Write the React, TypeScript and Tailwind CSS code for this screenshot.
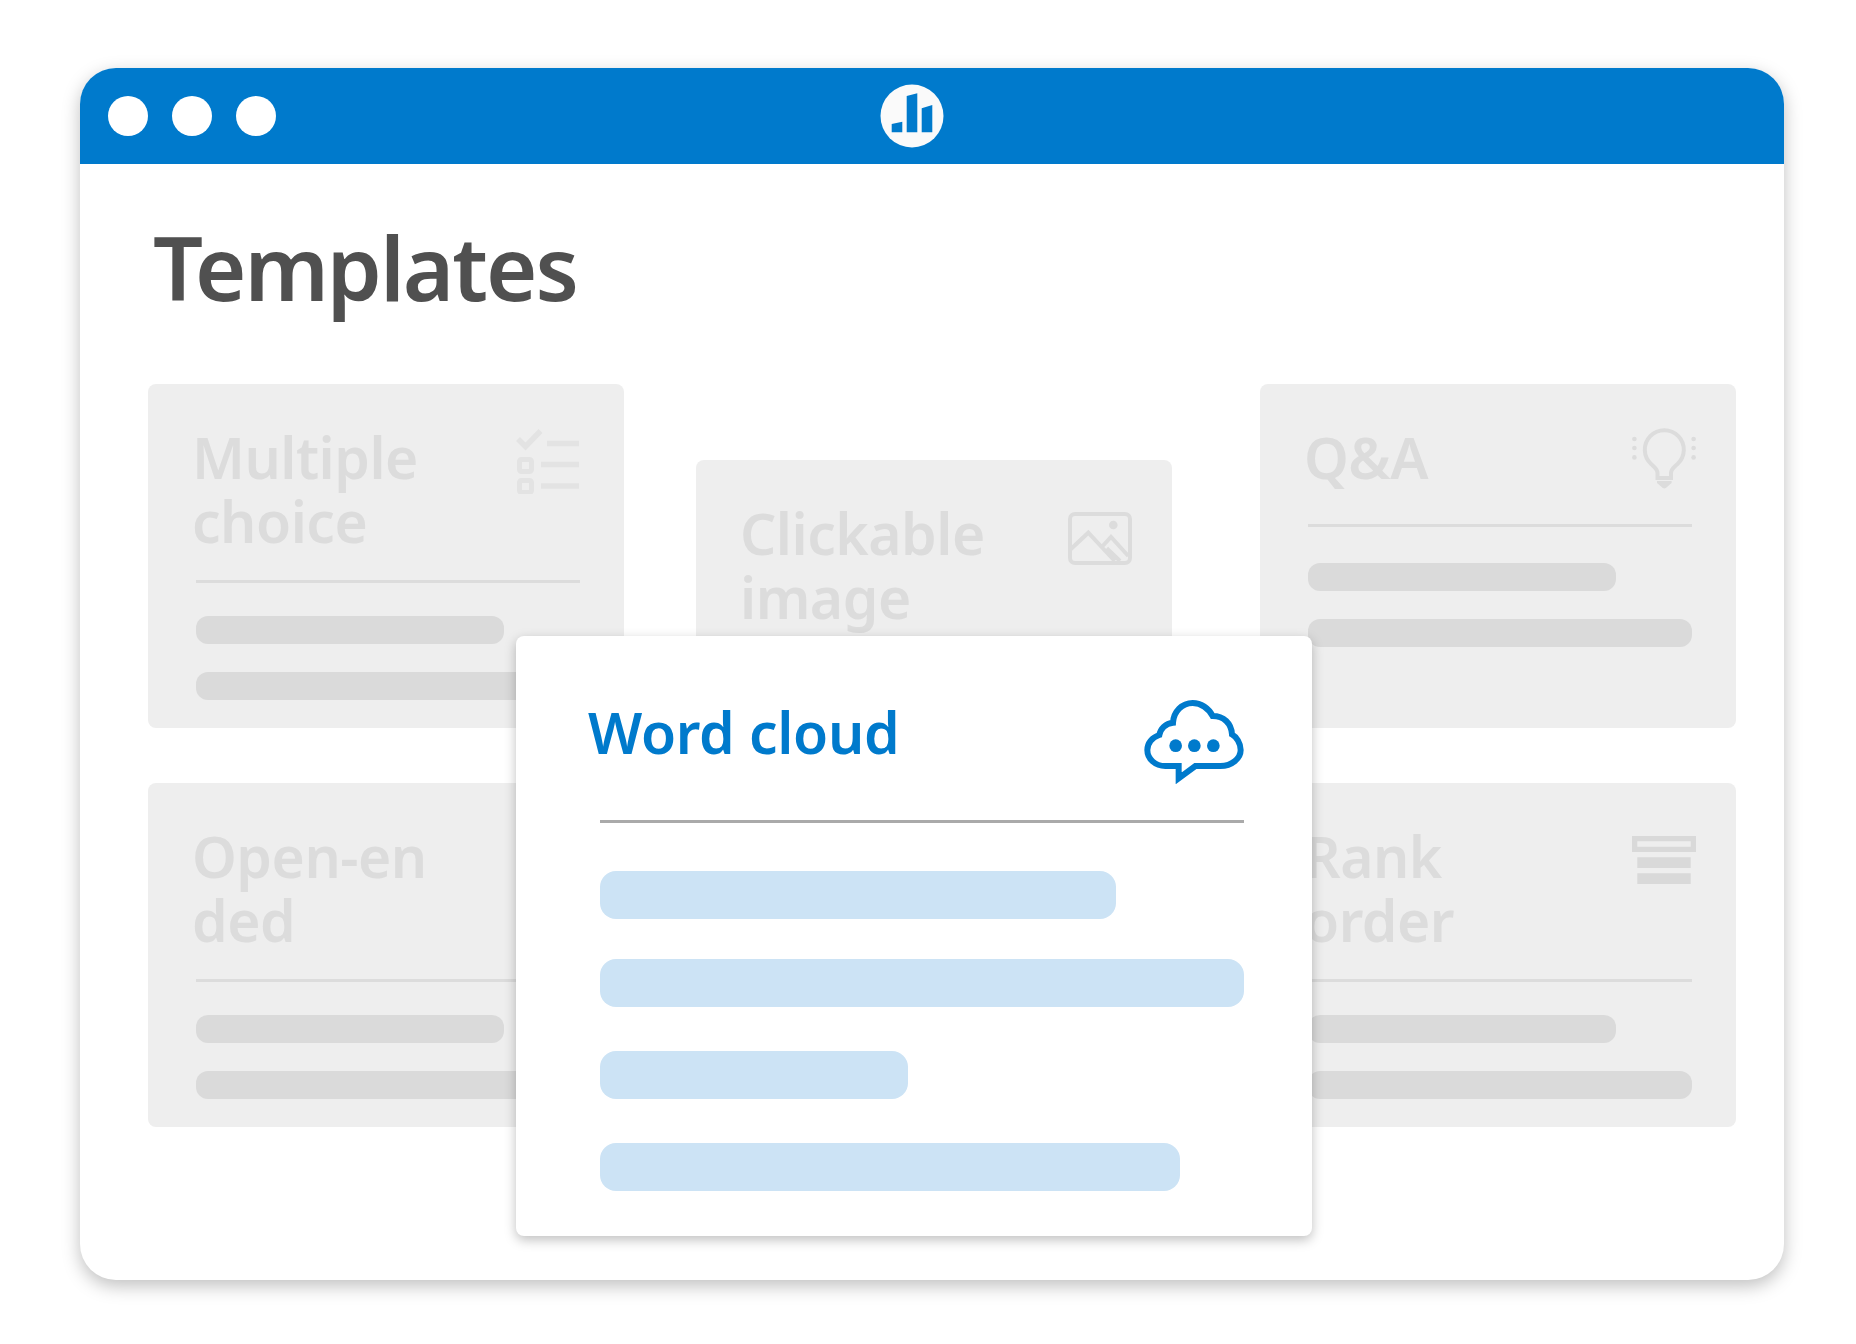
function LogoMark() {
  return (
    <svg width="64" height="64" viewBox="0 0 64 64">
      <circle cx="32" cy="32" r="31.5" fill="#fafafa" />
      <path d="M11.7 40 22.3 37.7V48.3H11.7Z M26.7 12 37.3 9.3V48.3H26.7Z M41.7 24.3 52.3 21V48.3H41.7Z" fill="#007acc" />
    </svg>
  );
}

function ChecklistIcon() {
  return (
    <svg width="64" height="66" viewBox="0 0 64 66" fill="none" stroke="#e3e3e3">
      <path d="M2 11 9.5 18.5 24.5 3" strokeWidth="5.5" />
      <path d="M31 15.5H63 M25 36.5H63 M25 58H63" strokeWidth="5.5" />
      <rect x="3.5" y="31.5" width="12" height="12" rx="2" strokeWidth="5" />
      <rect x="3.5" y="52.5" width="12" height="12" rx="2" strokeWidth="5" />
    </svg>
  );
}

function ImageIcon() {
  return (
    <svg width="64" height="53" viewBox="0 0 64 53" fill="none" stroke="#dcdcdc" strokeWidth="4">
      <rect x="2" y="2" width="60" height="49" rx="5" />
      <circle cx="45.3" cy="13" r="4.3" fill="#dcdcdc" stroke="none" />
      <path d="M2.7 37.3 20.3 20.7 46.7 49 M34.7 34 43 25 60.3 44 M38.7 36.3 52 49" />
    </svg>
  );
}

function BulbIcon() {
  return (
    <svg width="64" height="64" viewBox="0 0 64 64" fill="none" stroke="#dcdcdc" strokeWidth="4">
      <path d="M25.5 50V45C25.5 41 22 39 19.3 36.2A19.5 19.5 0 1 1 45.3 36.2C42.6 39 39 41 39 45V50Z" />
      <path d="M25 53H39.6V55L35 59A3.2 3.2 0 0 1 29.6 59L25 55Z" fill="#dcdcdc" stroke="none" />
      <g fill="#dcdcdc" stroke="none">
        <circle cx="2.4" cy="11" r="2.3" />
        <circle cx="2.4" cy="20" r="2.3" />
        <circle cx="2.4" cy="29.4" r="2.3" />
        <circle cx="61.6" cy="11" r="2.3" />
        <circle cx="61.6" cy="20" r="2.3" />
        <circle cx="61.6" cy="29.4" r="2.3" />
      </g>
    </svg>
  );
}

function RankIcon() {
  return (
    <svg width="64" height="48" viewBox="0 0 64 48">
      <path fillRule="evenodd" d="M0 0H64V16H0Z M5.3 5.3V10.7H58.7V5.3Z" fill="#d9d9d9" />
      <path d="M5.3 21.3H58.7V32H5.3Z M5.3 37.3H58.7V48H5.3Z" fill="#d9d9d9" />
    </svg>
  );
}

function CloudIcon() {
  return (
    <svg width="100" height="84" viewBox="42 30 298 252" fill="none" stroke="#007acc" strokeWidth="18">
      <path d="M145 228V265L195 228H270C305 228 331 205 331 180C331 160 318 140 305 133C303 100 280 78 247 78C235 55 212 39 187 39C155 39 130 65 128 98C105 100 90 118 87 135C65 142 51 160 51 180C51 207 75 228 105 228Z" />
      <g fill="#007acc" stroke="none">
        <circle cx="136" cy="167" r="19" />
        <circle cx="192" cy="167" r="19" />
        <circle cx="249" cy="167" r="19" />
      </g>
    </svg>
  );
}

function TemplateCard({ lines, icon, iconClass, className }: { lines: string[]; icon: React.ReactNode; iconClass: string; className?: string }) {
  const oneLine = lines.length === 1;
  return (
    <div className={`w-[476px] h-[344px] rounded-lg bg-[#eeeeee] ${className ?? ""}`}>
      <div className="flex justify-between pl-[44px]">
        <h3 className="pt-[41px] text-[57px] leading-[64px] font-semibold tracking-[-0.5px] text-[#dcdcdc]">
          {lines.map((line) => (
            <div key={line}>{line}</div>
          ))}
        </h3>
        <div className={iconClass}>{icon}</div>
      </div>
      <div className={`ml-[48px] w-[384px] ${oneLine ? "mt-[32px]" : "mt-[27px]"}`}>
        <div className="h-[3px] bg-[#dcdcdc]" />
        <div className={`h-[28px] w-[308px] rounded-xl bg-[#dadada] ${oneLine ? "mt-[36px]" : "mt-[33px]"}`} />
        <div className="mt-[28px] h-[28px] rounded-xl bg-[#dadada]" />
      </div>
    </div>
  );
}

export default function App() {
  return (
    <div className="h-[1344px] w-[1856px] overflow-hidden bg-white pt-[68px] pl-[80px] font-['Noto_Sans',sans-serif]">
      <div className="relative h-[1212px] w-[1704px] rounded-[36px] bg-white shadow-[0_6px_18px_rgba(0,0,0,0.25)]">
        <header className="relative flex h-[96px] items-center gap-[24px] rounded-t-[36px] bg-[#007acc] pl-[28px]">
          <span className="h-[40px] w-[40px] rounded-full bg-white" />
          <span className="h-[40px] w-[40px] rounded-full bg-white" />
          <span className="h-[40px] w-[40px] rounded-full bg-white" />
          <div className="absolute top-[16px] left-[800px]">
            <LogoMark />
          </div>
        </header>

        <h1 className="pt-[43px] pl-[73px] text-[88px] leading-[120px] font-semibold tracking-[-2px] text-[#505050]">Templates</h1>

        <div className="mt-[57px] ml-[68px]">
          <div className="flex">
            <TemplateCard lines={["Multiple", "choice"]} icon={<ChecklistIcon />} iconClass="pt-[44px] pr-[44px]" />
            <TemplateCard lines={["Clickable", "image"]} icon={<ImageIcon />} iconClass="pt-[52px] pr-[40px]" className="mt-[76px] ml-[72px]" />
            <TemplateCard lines={["Q&A"]} icon={<BulbIcon />} iconClass="pt-[44px] pr-[40px]" className="ml-[88px]" />
          </div>
          <div className="-mt-[21px] flex justify-between w-[1588px]">
            <TemplateCard lines={["Open-en", "ded"]} icon={<span />} iconClass="" />
            <TemplateCard lines={["Rank", "order"]} icon={<RankIcon />} iconClass="pt-[53px] pr-[40px]" />
          </div>
        </div>

        <div className="absolute top-[568px] left-[436px] h-[600px] w-[796px] rounded-lg bg-white shadow-[0_4px_12px_rgba(0,0,0,0.25)]">
          <div className="flex items-start justify-between pt-[64px] pr-[68px] pl-[72px]">
            <h2 className="text-[57px] leading-[64px] font-semibold tracking-[-0.3px] text-[#007acc]">Word cloud</h2>
            <CloudIcon />
          </div>
          <div className="mt-[36px] ml-[84px] w-[644px]">
            <div className="h-[3px] bg-[#aaaaaa]" />
            <div className="mt-[48px] h-[48px] w-[516px] rounded-2xl bg-[#cce3f5]" />
            <div className="mt-[40px] h-[48px] rounded-2xl bg-[#cce3f5]" />
            <div className="mt-[44px] h-[48px] w-[308px] rounded-2xl bg-[#cce3f5]" />
            <div className="mt-[44px] h-[48px] w-[580px] rounded-2xl bg-[#cce3f5]" />
          </div>
        </div>
      </div>
    </div>
  );
}
